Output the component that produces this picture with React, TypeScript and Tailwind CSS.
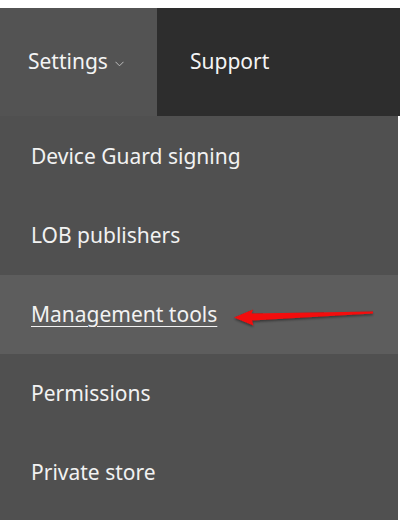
import React from "react";

const items = [
    "Device Guard signing",
    "LOB publishers",
    "Management tools",
    "Permissions",
    "Private store",
];

function RedArrow() {
    return (
        <svg className="absolute left-[232px] top-[305px]" width="146" height="26" viewBox="0 0 146 26">
            <defs>
                <filter id="sh" x="-10%" y="-50%" width="120%" height="200%">
                    <feDropShadow dx="0" dy="1.5" stdDeviation="1.2" floodColor="#000" floodOpacity="0.45" />
                </filter>
            </defs>
            <path
                d="M2 12.5 L21 4.5 L19.5 8.5 L141 6.5 L141 8.5 L20 15.5 L21.5 20.5 Z"
                fill="#f30a0a"
                filter="url(#sh)"
            />
        </svg>
    );
}

export default function App() {
    return (
        <div className="relative w-[400px] h-[523px] bg-white pt-2" style={{ fontFamily: '"Noto Sans", "Open Sans", sans-serif' }}>
            {/* top nav */}
            <div className="flex h-[108px]">
                <div className="w-[157px] bg-[#535353] flex items-center pl-[28px] text-[21px] text-[#f4f4f4]">
                    <span>Settings</span>
                    <svg className="ml-[7px] mt-[3px]" width="9" height="6" viewBox="0 0 9 6">
                        <path d="M0.5 0.8 L4.5 4.8 L8.5 0.8" stroke="#bdbdbd" strokeWidth="1" fill="none" />
                    </svg>
                </div>
                <div className="flex-1 bg-[#2d2d2d] flex items-center pl-[33px] text-[21px] text-[#f4f4f4]">
                    Support
                </div>
            </div>

            {/* dropdown menu */}
            <div className="w-[398px] h-[404px] bg-[#505050] pt-[1px]">
                {items.map((label) => {
                    const active = label === "Management tools";
                    return (
                        <div
                            key={label}
                            className={`h-[79px] flex items-center pl-[31px] text-[21px] text-[#f2f2f2] ${active ? "bg-[#5d5d5d]" : ""}`}
                        >
                            <span className={active ? "underline underline-offset-[4px] decoration-1" : ""}>{label}</span>
                        </div>
                    );
                })}
            </div>

            <RedArrow />
        </div>
    );
}
